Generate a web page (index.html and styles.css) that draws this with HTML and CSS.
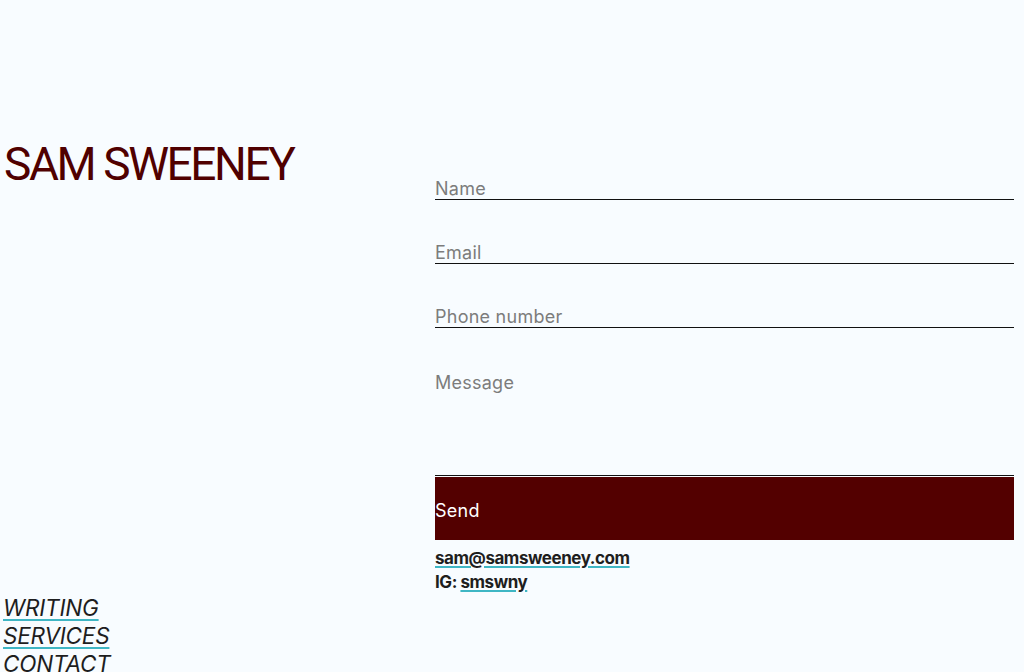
FILE: index.html
```html
<!DOCTYPE html>
<html lang="en">
<head>
    <meta charset="UTF-8">
    <meta name="viewport" content="width=device-width, initial-scale=1.0">
    <title>Contact - Sam Sweeney</title>
    <link rel="stylesheet" href="styles.css">
</head>
<body>
    <div class="page">
        <div class="sidebar">
            <h1 class="site-title">SAM SWEENEY</h1>
            <nav class="nav">
                <a href="#">WRITING</a>
                <a href="#">SERVICES</a>
                <a href="#" class="current">CONTACT</a>
            </nav>
        </div>

        <div class="content">
            <form class="contact-form" onsubmit="return false">
                <input class="field" type="text" placeholder="Name">
                <input class="field" type="email" placeholder="Email">
                <input class="field" type="tel" placeholder="Phone number">
                <textarea class="field message" placeholder="Message"></textarea>
                <button class="send-btn" type="submit">Send</button>
            </form>
            <div class="contact-info">
                <a href="#">sam@samsweeney.com</a>
                <div>IG: <a href="#">smswny</a></div>
            </div>
        </div>
    </div>
</body>
</html>
```

FILE: styles.css
```css
body {
    margin: 0;
    background-color: #f8fcff;
    font-family: Inter, "Liberation Sans", sans-serif;
    color: #1e1e1e;
}
.page {
    display: grid;
    grid-template-columns: 435px 1fr;
    padding-right: 10px;
    height: 672px;
    overflow: hidden;
}
.sidebar {
    display: flex;
    flex-direction: column;
    justify-content: space-between;
    padding: 136px 0 0 3px;
    height: 542px;
}
.site-title {
    margin: 0 0 0 1px;
    font-family: Roboto, "Liberation Sans", sans-serif;
    font-weight: 400;
    font-size: 46px;
    letter-spacing: -2.4px;
    line-height: 56px;
    color: #500000;
}
.nav {
    display: flex;
    flex-direction: column;
    align-items: flex-start;
}
.nav a {
    font-style: italic;
    font-size: 22.5px;
    line-height: 28px;
    letter-spacing: -0.2px;
    color: #1e1e1e;
    text-decoration: underline;
    text-decoration-color: #3fb6c4;
    text-decoration-thickness: 1.5px;
    text-underline-offset: 3px;
}
.nav a.current {
    text-decoration: none;
}
.content {
    padding-top: 170px;
}
.contact-form {
    display: flex;
    flex-direction: column;
}
.field {
    font-family: Inter, "Liberation Sans", sans-serif;
    font-size: 18px;
    letter-spacing: 0.25px;
    color: #1e1e1e;
    background: transparent;
    border: none;
    border-bottom: 1.5px solid #111;
    border-radius: 0;
    padding: 9px 0 1px;
    margin: 0 0 34px;
    height: 30px;
    box-sizing: border-box;
    outline: none;
}
.field::placeholder {
    color: #7c7c7c;
}
.message {
    height: 108px;
    margin: 6px 0 1px;
    padding-top: 4px;
    resize: none;
}
.send-btn {
    height: 63px;
    background-color: #530000;
    color: #fff;
    border: none;
    padding: 4px 0 0;
    text-align: left;
    font-family: Inter, "Liberation Sans", sans-serif;
    font-size: 18px;
    letter-spacing: 0.25px;
    cursor: pointer;
}
.contact-info {
    margin-top: 6px;
    font-size: 17px;
    font-weight: 700;
    line-height: 24px;
    letter-spacing: -0.45px;
}
.contact-info a {
    color: #1e1e1e;
    text-decoration: underline;
    text-decoration-color: #3fb6c4;
    text-decoration-thickness: 1.5px;
    text-underline-offset: 2px;
}
```
